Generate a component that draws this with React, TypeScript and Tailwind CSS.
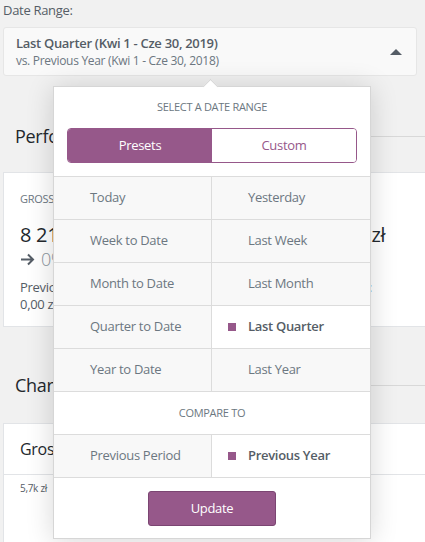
const presets = [
  ["Today", "Yesterday"],
  ["Week to Date", "Last Week"],
  ["Month to Date", "Last Month"],
  ["Quarter to Date", "Last Quarter"],
  ["Year to Date", "Last Year"],
];

const selectedPeriod = "Last Quarter";
const selectedCompare = "Previous Year";

function Cell({ label, active, left }: { label: string; active: boolean; left: boolean }) {
  return (
    <div
      className={`flex items-center pl-[16px] text-[13px] ${left ? "border-r border-[#dcdcdc]" : ""} ${
        active ? "bg-white font-semibold text-[#555d66]" : "bg-[#f8f8f8] text-[#6c7781]"
      }`}
    >
      <span className={`w-[8px] h-[8px] mr-[12px] ${active ? "bg-[#96588a]" : ""}`} />
      {label}
    </div>
  );
}

function SectionHeader({ title }: { title: string }) {
  return (
    <div className="flex items-center h-[36px] pl-[12px]">
      <h2 className="text-[18px] text-[#23282d] mr-4">{title}</h2>
      <div className="flex-1 h-px bg-[#d8d8d8]" />
    </div>
  );
}

function SummaryCell({ label, value, width }: { label: string; value: string; width: string }) {
  return (
    <div className={`${width} shrink-0 px-[16px] pt-[17px]`}>
      <div className="text-[11px] uppercase text-[#6c7781] leading-[18px]">{label}</div>
      <div className="mt-[14px] text-[20px] text-[#23282d] leading-[26px]">{value}</div>
      <div className="flex items-center h-[22px] text-[18px] text-[#8d96a0] font-light">
        <svg width="15" height="13" viewBox="0 0 15 13" className="mr-[6px]">
          <path d="M1 6.5 H13 M8 1.5 L13 6.5 L8 11.5" stroke="#555d66" strokeWidth="2" fill="none" />
        </svg>
        0%
      </div>
      <div className="mt-[9px] text-[13px] text-[#555d66] leading-[17px]">Previous Year:</div>
      <div className="text-[13px] text-[#555d66] leading-[17px]">0,00 zł</div>
    </div>
  );
}

export default function App() {
  return (
    <div
      className="relative w-[425px] h-[542px] overflow-hidden bg-[#f1f1f1] tracking-[-0.3px]"
      style={{ fontFamily: '"Open Sans", "Noto Sans", sans-serif' }}
    >
      <div className="pl-[3px] pr-[8px]">
        <div className="text-[13px] leading-5 text-[#555d66]">Date Range:</div>
        <div className="mt-[7px] h-[49px] flex items-center justify-between px-[12px] bg-[#f9f9f9] border border-[#e6e6e6] rounded-[3px]">
          <div>
            <div className="text-[13px] font-semibold leading-[17px] text-[#555d66]">
              Last Quarter (Kwi 1 - Cze 30, 2019)
            </div>
            <div className="text-[12px] leading-[17px] text-[#6c7781]">vs. Previous Year (Kwi 1 - Cze 30, 2018)</div>
          </div>
          <svg width="12" height="6" viewBox="0 0 12 6" className="mr-[2px]">
            <path d="M0 6 L6 0 L12 6 Z" fill="#555d66" />
          </svg>
        </div>
      </div>

      <div className="pl-[3px] mt-[42px]">
        <SectionHeader title="Performance" />
      </div>

      <div className="ml-[3px] mt-[18px] w-[480px] h-[155px] bg-white border border-[#e2e4e7] flex">
        <SummaryCell label="Gross Sales" value="8 212,40 zł" width="w-[270px]" />
        <SummaryCell label="Net Sales" value="8 212,40 zł" width="w-[200px]" />
      </div>

      <div className="pl-[3px] mt-[40px]">
        <SectionHeader title="Charts" />
      </div>

      <div className="ml-[3px] mt-[20px] w-[480px] h-[200px] bg-white border border-[#e2e4e7]">
        <div className="h-[51px] flex items-center px-[16px] border-b border-[#e2e4e7] text-[16px] text-[#23282d]">
          Gross Sales
        </div>
        <div className="px-[16px] pt-[6px] text-[10px] text-[#555d66]">5,7k zł</div>
      </div>

      {/* Date range popover */}
      <div className="absolute left-[53px] top-[86px] w-[318px] bg-white border border-[#d6d6d6] shadow-[0_2px_26px_rgba(0,0,0,0.16)]">
        <div className="absolute left-[151px] -top-[6px] w-[11px] h-[11px] rotate-45 bg-white border-l border-t border-[#d6d6d6]" />
        <div className="relative px-[13px] pt-[12px] pb-[13px]">
          <div className="text-center text-[11px] leading-[16px] uppercase text-[#6c7781]">Select a date range</div>
          <div className="mt-[13px] flex h-[35px] rounded-[4px] border border-[#96588a] overflow-hidden text-[13px]">
            <div className="flex-1 flex items-center justify-center bg-[#96588a] text-white">Presets</div>
            <div className="flex-1 flex items-center justify-center bg-white text-[#96588a]">Custom</div>
          </div>
        </div>
        <div className="relative">
          {presets.map((row) => (
            <div key={row[0]} className="grid grid-cols-2 h-[43px] border-t border-[#dcdcdc]">
              <Cell label={row[0]} active={row[0] === selectedPeriod} left />
              <Cell label={row[1]} active={row[1] === selectedPeriod} left={false} />
            </div>
          ))}
          <div className="h-[43px] flex items-center justify-center border-t border-[#dcdcdc] text-[11px] uppercase text-[#6c7781]">
            Compare to
          </div>
          <div className="grid grid-cols-2 h-[43px] border-t border-[#dcdcdc]">
            <Cell label="Previous Period" active={"Previous Period" === selectedCompare} left />
            <Cell label="Previous Year" active={"Previous Year" === selectedCompare} left={false} />
          </div>
          <div className="border-t border-[#dcdcdc] flex justify-center pt-[13px] pb-[12px]">
            <button className="w-[128px] h-[35px] rounded-[3px] bg-[#96588a] border border-[#7b4572] text-white text-[13px]">
              Update
            </button>
          </div>
        </div>
      </div>
    </div>
  );
}
